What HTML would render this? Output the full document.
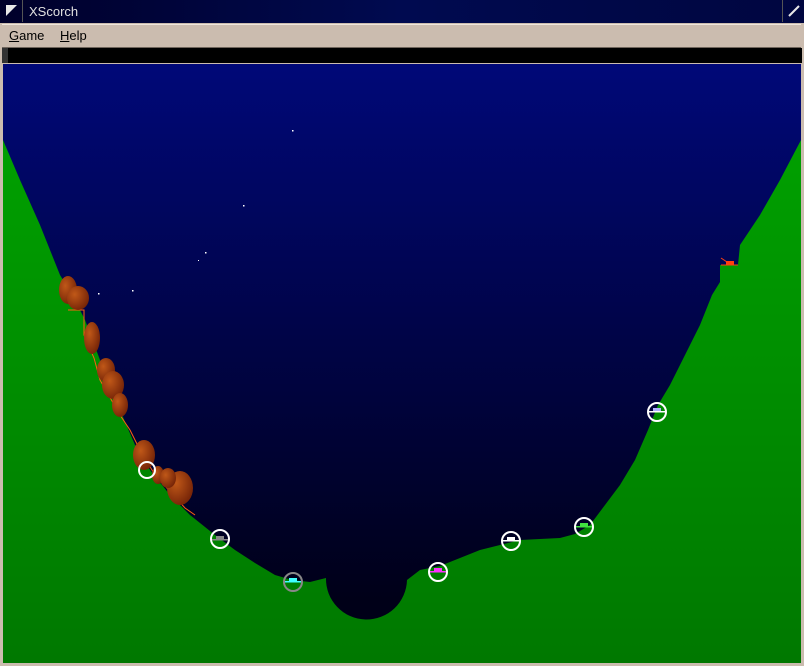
<!DOCTYPE html>
<html><head><style>
html,body{margin:0;padding:0;width:804px;height:666px;overflow:hidden;background:#cbbcaf;font-family:"Liberation Sans",sans-serif}
.t{position:absolute;left:0;top:0;width:804px;height:23px;background:linear-gradient(90deg,#00002a,#000a50 50%,#000640);}
.menu{position:absolute;left:2px;top:24px;width:799px;height:22px;background:#cbbcaf;border-top:1px solid #efe6dc;border-bottom:1px solid #6f655c;}
.menu span{position:absolute;top:3px;font-size:13px;color:#000}
.blk{position:absolute;left:2px;top:48px;width:800px;height:15px;background:#000}
</style></head><body>
<div class="t">
 <div style="position:absolute;left:0;top:0;width:22px;height:22px;border-right:1px solid #555"><svg width="22" height="22"><polygon points="6,5 17,5 6,16" fill="#e8e8e8"/></svg></div>
 <div style="position:absolute;left:29px;top:4px;font-size:13px;color:#e0e0e0">XScorch</div>
 <div style="position:absolute;left:782px;top:0;width:22px;height:22px;border-left:1px solid #555"><svg width="22" height="22"><line x1="6" y1="16" x2="16" y2="6" stroke="#e8e8e8" stroke-width="2"/></svg></div>
</div>
<div class="menu"><span style="left:7px"><u>G</u>ame</span><span style="left:58px"><u>H</u>elp</span></div>
<div class="blk"><div style="position:absolute;left:0;top:0;width:6px;height:15px;background:#333"></div></div>
<svg style="position:absolute;left:3px;top:64px" width="798" height="599" viewBox="3 64 798 599">
<defs>
<linearGradient id="sky" x1="0" y1="64" x2="0" y2="600" gradientUnits="userSpaceOnUse"><stop offset="0" stop-color="#000878"/><stop offset="1" stop-color="#000018"/></linearGradient>
<linearGradient id="gr" x1="0" y1="140" x2="0" y2="663" gradientUnits="userSpaceOnUse"><stop offset="0" stop-color="#00a000"/><stop offset="1" stop-color="#007800"/></linearGradient>
<radialGradient id="fire" cx="0.35" cy="0.35" r="0.75"><stop offset="0" stop-color="#c05818"/><stop offset="1" stop-color="#702006"/></radialGradient>
</defs>
<rect x="3" y="64" width="798" height="599" fill="url(#sky)"/>
<path fill="url(#gr)" d="M3,140 L20,180 L40,225 L60,275 L75,300 L85,320 L100,360 L120,410 L135,445 L150,470 L170,495 L190,515 L215,535 L235,550 L255,563 L275,575 L292,580 L310,582 L326,578 A40,40 0 0 0 407,580 L420,570 L440,566 L460,558 L480,550 L500,545 L520,540 L560,538 L575,534 L590,525 L605,505 L620,485 L635,460 L648,430 L658,405 L670,385 L685,355 L700,325 L712,295 L720,282 L720,265 L738,265 L740,245 L760,215 L780,180 L801,140 L801,663 L3,663 Z"/>
<g fill="#fff"><rect x="292" y="130" width="1.5" height="1.5"/><rect x="243" y="205" width="1.5" height="1.5"/><rect x="205" y="252" width="1.5" height="1.5"/><rect x="132" y="290" width="1.5" height="1.5"/><rect x="98" y="293" width="1.5" height="1.5"/><rect x="198" y="260" width="1" height="1"/></g>
<polyline fill="none" stroke="#ff6010" stroke-width="1" points="68,310 84,310 84,335 94,358 100,380 120,415 130,430 140,450 155,475 185,508 195,515"/>
<g fill="url(#fire)">
<ellipse cx="68" cy="290" rx="9" ry="14"/><ellipse cx="78" cy="298" rx="11" ry="12"/><ellipse cx="92" cy="338" rx="8" ry="16"/>
<ellipse cx="106" cy="370" rx="9" ry="12"/><ellipse cx="113" cy="385" rx="11" ry="14"/><ellipse cx="120" cy="405" rx="8" ry="12"/>
<ellipse cx="144" cy="455" rx="11" ry="15"/><ellipse cx="158" cy="475" rx="6" ry="9"/><ellipse cx="180" cy="488" rx="13" ry="17"/><ellipse cx="168" cy="478" rx="8" ry="10"/>
</g>
<g fill="none" stroke-width="2">
<circle cx="147" cy="470" r="8" stroke="#fff"/>
<circle cx="220" cy="539" r="9" stroke="#fff"/>
<circle cx="293" cy="582" r="9" stroke="#888"/>
<circle cx="438" cy="572" r="9" stroke="#fff"/>
<circle cx="511" cy="541" r="9" stroke="#fff"/>
<circle cx="584" cy="527" r="9" stroke="#fff"/>
<circle cx="657" cy="412" r="9" stroke="#fff"/>
</g>
<g>
<rect x="216" y="536" width="8" height="4" fill="#888"/><rect x="212" y="539" width="16" height="1.5" fill="#888"/>
<rect x="289" y="578" width="8" height="4" fill="#40ffff"/><rect x="285" y="581" width="16" height="1.5" fill="#40ffff"/>
<rect x="434" y="568" width="8" height="4" fill="#ff30ff"/><rect x="430" y="571" width="16" height="1.5" fill="#ff30ff"/>
<rect x="507" y="537" width="8" height="4" fill="#fff"/><rect x="503" y="540" width="16" height="1.5" fill="#fff"/>
<rect x="580" y="523" width="8" height="4" fill="#40e040"/><rect x="576" y="526" width="16" height="1.5" fill="#40e040"/>
<rect x="653" y="408" width="8" height="4" fill="#b0b0ff"/><rect x="649" y="411" width="16" height="1.5" fill="#fff"/>
</g>
<rect x="726" y="261" width="8" height="4" fill="#ff4010"/><line x1="721" y1="258" x2="727" y2="262" stroke="#ff4010"/><line x1="721" y1="265" x2="738" y2="265" stroke="#ff4010"/>
</svg>
</body></html>
